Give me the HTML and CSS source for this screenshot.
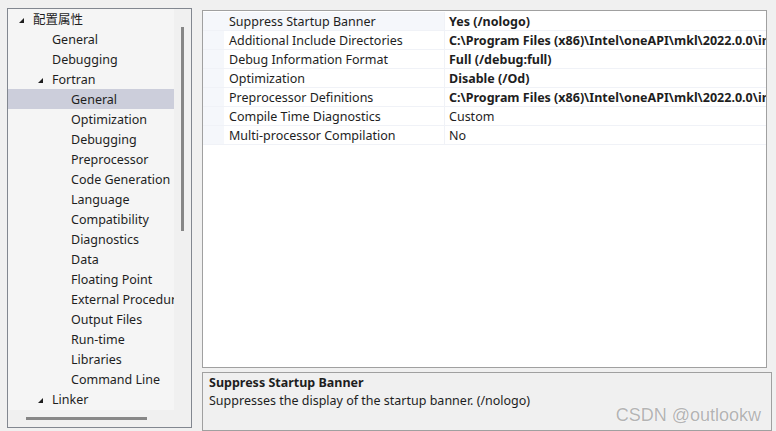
FILE: index.html
```html
<!DOCTYPE html>
<html>
<head>
    <link rel="stylesheet" href="styles.css">
</head>
<body>
    <div class="window">
        <div class="tree-panel">
            <div class="tree-main">
                <ul class="tree">
                    <li class="lvl0"><span class="arrow"><svg width="5" height="5" viewBox="0 0 5 5"><polygon points="5,0 5,5 0,5" fill="#1e1e1e"/></svg></span>配置属性</li>
                    <li class="lvl1">General</li>
                    <li class="lvl1">Debugging</li>
                    <li class="lvl1 has-arrow"><span class="arrow"><svg width="5" height="5" viewBox="0 0 5 5"><polygon points="5,0 5,5 0,5" fill="#1e1e1e"/></svg></span>Fortran</li>
                    <li class="lvl2 selected">General</li>
                    <li class="lvl2">Optimization</li>
                    <li class="lvl2">Debugging</li>
                    <li class="lvl2">Preprocessor</li>
                    <li class="lvl2">Code Generation</li>
                    <li class="lvl2">Language</li>
                    <li class="lvl2">Compatibility</li>
                    <li class="lvl2">Diagnostics</li>
                    <li class="lvl2">Data</li>
                    <li class="lvl2">Floating Point</li>
                    <li class="lvl2">External Procedures</li>
                    <li class="lvl2">Output Files</li>
                    <li class="lvl2">Run-time</li>
                    <li class="lvl2">Libraries</li>
                    <li class="lvl2">Command Line</li>
                    <li class="lvl1 has-arrow"><span class="arrow"><svg width="5" height="5" viewBox="0 0 5 5"><polygon points="5,0 5,5 0,5" fill="#1e1e1e"/></svg></span>Linker</li>
                </ul>
                <div class="vscroll"><div class="vthumb"></div></div>
            </div>
            <div class="hscroll"><div class="hthumb"></div></div>
        </div>

        <div class="right">
            <div class="grid-panel">
                <div class="prop-row first">
                    <div class="margin"></div>
                    <div class="name">Suppress Startup Banner</div>
                    <div class="value bold">Yes (/nologo)</div>
                </div>
                <div class="prop-row">
                    <div class="margin"></div>
                    <div class="name">Additional Include Directories</div>
                    <div class="value bold">C:\Program Files (x86)\Intel\oneAPI\mkl\2022.0.0\include</div>
                </div>
                <div class="prop-row">
                    <div class="margin"></div>
                    <div class="name">Debug Information Format</div>
                    <div class="value bold">Full (/debug:full)</div>
                </div>
                <div class="prop-row">
                    <div class="margin"></div>
                    <div class="name">Optimization</div>
                    <div class="value bold">Disable (/Od)</div>
                </div>
                <div class="prop-row">
                    <div class="margin"></div>
                    <div class="name">Preprocessor Definitions</div>
                    <div class="value bold">C:\Program Files (x86)\Intel\oneAPI\mkl\2022.0.0\include</div>
                </div>
                <div class="prop-row">
                    <div class="margin"></div>
                    <div class="name">Compile Time Diagnostics</div>
                    <div class="value">Custom</div>
                </div>
                <div class="prop-row">
                    <div class="margin"></div>
                    <div class="name">Multi-processor Compilation</div>
                    <div class="value">No</div>
                </div>
            </div>
            <div class="desc-panel">
                <div class="desc-title">Suppress Startup Banner</div>
                <div class="desc-text">Suppresses the display of the startup banner. (/nologo)</div>
                <div class="watermark">CSDN @outlookw</div>
            </div>
        </div>
    </div>
</body>
</html>
```

FILE: styles.css
```css
body {
    margin: 0;
    background: #f0f0f0;
    font-family: "Noto Sans", "Noto Sans CJK SC", sans-serif;
    font-size: 12.5px;
    color: #1e1e1e;
}

.window {
    display: flex;
    width: 776px;
    height: 431px;
    overflow: hidden;
}

/* left tree */
.tree-panel {
    margin: 8px 0 0 7px;
    width: 183px;
    height: 418px;
    border: 1px solid #828790;
    display: flex;
    flex-direction: column;
}

.tree-main {
    display: flex;
    height: 401px;
}

.tree {
    list-style: none;
    margin: 0;
    padding: 0;
    width: 166px;
    background: #f5f5f5;
    overflow: hidden;
}

.tree li {
    height: 20px;
    line-height: 22px;
    white-space: nowrap;
    position: relative;
}

.tree .lvl0 { padding-left: 25px; }
.tree .lvl1 { padding-left: 44px; }
.tree .lvl2 { padding-left: 63px; }

.tree .selected {
    background: #cccedb;
}

.arrow {
    position: absolute;
    top: 9px;
    width: 5px;
    height: 5px;
    line-height: 0;
}

.lvl0 .arrow { left: 11px; }
.lvl1 .arrow { left: 30px; }

.vscroll {
    width: 17px;
    background: #f0f0f0;
    position: relative;
}

.vthumb {
    position: absolute;
    left: 7px;
    top: 18px;
    width: 3px;
    height: 204px;
    background: #868686;
}

.hscroll {
    flex: 1;
    position: relative;
    background: #f0f0f0;
}

.hthumb {
    position: absolute;
    left: 18px;
    top: 7px;
    width: 121px;
    height: 3px;
    background: #868686;
}

/* right side */
.right {
    margin: 10px 0 0 10px;
    display: flex;
    flex-direction: column;
    gap: 4px;
}

.grid-panel {
    width: 563px;
    height: 355px;
    border: 1px solid #a0a0a0;
    background: #ffffff;
    padding-top: 1px;
    box-sizing: content-box;
}

.prop-row {
    display: flex;
    height: 19px;
    line-height: 20px;
    white-space: nowrap;
    border-bottom: 1px solid #f0f2f7;
    box-sizing: border-box;
}

.prop-row .margin {
    width: 21px;
    flex-shrink: 0;
    background: #f5f7fb;
}

.prop-row .name {
    width: 221px;
    flex-shrink: 0;
    padding-left: 5px;
    box-sizing: border-box;
    border-right: 1px solid #f0f2f7;
    background: #ffffff;
}

.prop-row.first .name {
    background: #f5f7fb;
}

.prop-row .value {
    padding-left: 4px;
    overflow: hidden;
    background: #ffffff;
    flex: 1;
}

.bold {
    font-weight: bold;
}

.desc-panel {
    width: 562px;
    height: 56px;
    border: 1px solid #a0a0a0;
    background: #f0f0f0;
    padding: 1px 0 0 6px;
    box-sizing: content-box;
    position: relative;
}

.desc-title {
    font-weight: bold;
    line-height: 18px;
}

.desc-text {
    line-height: 18px;
}

.watermark {
    position: absolute;
    right: 10px;
    bottom: 4px;
    font-family: "Liberation Sans", Arial, sans-serif;
    font-size: 18px;
    color: #b4b4b4;
    text-shadow: 0 0 1px #ffffff, 0 0 1px #ffffff;
}
```
